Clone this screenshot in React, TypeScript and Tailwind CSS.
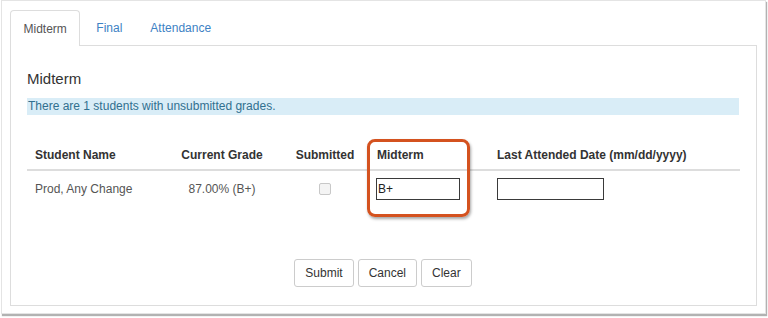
import React from "react";

export default function App() {
  return (
    <div
      className="relative w-[768px] h-[318px] bg-white pl-[1px] overflow-hidden"
      style={{ fontFamily: '"Liberation Sans", Arial, sans-serif' }}
    >
      <div className="w-[765px] h-[314px] bg-white border border-[#e4e4e4] shadow-[1px_2px_1px_rgba(0,0,0,0.3)] pt-[8px] pl-[8px]">
        {/* Tabs */}
        <div className="flex h-[36px] items-end">
          <div className="relative z-10 h-[36px] px-[12.5px] border border-[#dddddd] border-b-0 rounded-t-[4px] bg-white flex items-center text-[12px] text-[#555555] -mb-[1px]">
            Midterm
          </div>
          <div className="h-[35px] px-[15px] flex items-center text-[12px] text-[#3d82c4] ml-[1px]">
            Final
          </div>
          <div className="h-[35px] pl-[13px] pr-[15px] flex items-center text-[12px] text-[#3d82c4]">
            Attendance
          </div>
        </div>
        {/* Panel */}
        <div className="w-[747px] h-[261px] border border-[#dddddd] pl-[16px] pr-[17px] pt-[24px]">
          <div className="text-[15px] leading-[18px] text-[#333333]">Midterm</div>
          <div className="mt-[10px] h-[17px] bg-[#d9edf7] text-[#31708f] text-[12px] leading-[17px] pl-[1px]">
            There are 1 students with unsubmitted grades.
          </div>
          {/* Table */}
          <div className="mt-[26px] grid grid-cols-[135px_120px_86px_121px_251px] text-[12px]">
            <div className="h-[30px] flex items-center pl-[8px] font-bold text-[#333333] border-b-2 border-[#dddddd]">
              Student Name
            </div>
            <div className="h-[30px] flex items-center justify-center font-bold text-[#333333] border-b-2 border-[#dddddd]">
              Current Grade
            </div>
            <div className="h-[30px] flex items-center justify-center font-bold text-[#333333] border-b-2 border-[#dddddd]">
              Submitted
            </div>
            <div className="h-[30px] flex items-center pl-[9px] font-bold text-[#333333] border-b-2 border-[#dddddd]">
              Midterm
            </div>
            <div className="h-[30px] flex items-center pl-[8px] font-bold text-[#333333] border-b-2 border-[#dddddd]">
              Last Attended Date (mm/dd/yyyy)
            </div>

            <div className="h-[34px] flex items-center pl-[8px] text-[#555555] pt-[2px]">
              Prod, Any Change
            </div>
            <div className="h-[34px] flex items-center justify-center text-[#555555] pt-[2px]">
              87.00% (B+)
            </div>
            <div className="h-[34px] flex items-center justify-center pt-[2px]">
              <div className="w-[12px] h-[12px] border border-[#c8c8c8] bg-[#f4f4f4] rounded-[2px]" />
            </div>
            <div className="h-[34px] flex items-center pl-[8px] pt-[2px]">
              <div className="w-[84px] h-[22px] border-[1.5px] border-[#3a3a3a] bg-white flex items-center pl-[1px] text-[12px] text-[#222222]">
                B+
              </div>
            </div>
            <div className="h-[34px] flex items-center pl-[8px] pt-[2px]">
              <div className="w-[107px] h-[22px] border-[1.5px] border-[#3a3a3a] bg-white" />
            </div>
          </div>
          {/* Buttons */}
          <div className="mt-[54px] flex justify-center gap-[4px] text-[12px] text-[#333333]">
            <button className="h-[28px] px-[10px] border border-[#cccccc] rounded-[3px] bg-white">Submit</button>
            <button className="h-[28px] px-[10px] border border-[#cccccc] rounded-[3px] bg-white">Cancel</button>
            <button className="h-[28px] px-[10px] border border-[#cccccc] rounded-[3px] bg-white">Clear</button>
          </div>
        </div>
      </div>
      {/* Annotation highlight */}
      <div className="absolute left-[367px] top-[139px] w-[103px] h-[78px] border-[3px] border-[#d4521f] rounded-[8px] shadow-[1px_2px_3px_rgba(0,0,0,0.35)]" />
    </div>
  );
}
